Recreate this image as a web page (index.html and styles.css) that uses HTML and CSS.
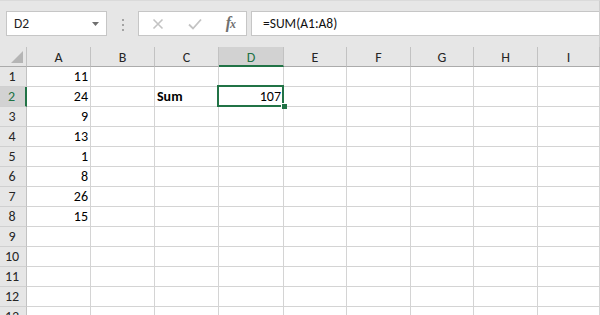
FILE: index.html
```html
<!DOCTYPE html>
<html lang="en">
<head>
  <meta charset="UTF-8" />
  <title>SUM - Sheet</title>
  <link rel="stylesheet" href="styles.css">
</head>
<body>
  <div class="toolbar">
    <div class="name-box">
      <span>D2</span>
      <svg class="caret" width="7" height="4" viewBox="0 0 7 4"><path d="M0 0h7L3.5 4z" fill="#6f6f6f"/></svg>
    </div>
    <div class="grip"><i></i><i></i><i></i></div>
    <div class="fx-buttons">
      <svg width="12" height="12" viewBox="0 0 12 12"><path d="M1.5 1.5l9 9M10.5 1.5l-9 9" stroke="#c3c3c3" stroke-width="1.6" fill="none"/></svg>
      <svg width="14" height="12" viewBox="0 0 14 12"><path d="M1 6.5l4 4L13 1.5" stroke="#c3c3c3" stroke-width="1.8" fill="none"/></svg>
      <span class="fx">f<small>x</small></span>
    </div>
    <div class="formula">=SUM(A1:A8)</div>
  </div>

  <div class="sheet" id="sheet">
    <div class="hd corner"><span class="tri"></span></div>
    <div class="hd">A</div>
    <div class="hd">B</div>
    <div class="hd">C</div>
    <div class="hd sel-col">D</div>
    <div class="hd">E</div>
    <div class="hd">F</div>
    <div class="hd">G</div>
    <div class="hd">H</div>
    <div class="hd">I</div>
  </div>

  <script>
    // A column values, plus the Sum label in C2 and the result in D2
    const values = [11, 24, 9, 13, 1, 8, 26, 15];
    const sheet = document.getElementById('sheet');

    for (let r = 1; r <= 13; r++) {
      const rh = document.createElement('div');
      rh.className = 'rh' + (r === 2 ? ' sel-row' : '');
      rh.textContent = r;
      sheet.appendChild(rh);

      for (let c = 0; c < 9; c++) {
        const cell = document.createElement('div');
        cell.className = 'cell';
        if (c === 0 && values[r - 1] !== undefined) cell.textContent = values[r - 1];
        if (r === 2 && c === 2) {
          cell.textContent = 'Sum';
          cell.classList.add('label');
        }
        if (r === 2 && c === 3) {
          cell.textContent = '107';
          cell.classList.add('active');
        }
        sheet.appendChild(cell);
      }
    }
  </script>
</body>
</html>
```

FILE: styles.css
```css
:root {
  --chrome: #e6e6e6;
  --grid: #d4d4d4;
  --head-line: #c2c2c2;
  --green: #217346;
}

body {
  margin: 0;
  width: 600px;
  height: 315px;
  overflow: hidden;
  background: #fff;
  font-family: Carlito, "Liberation Sans", Arial, sans-serif;
  font-size: 13px;
  color: #000;
}

/* Formula bar */
.toolbar {
  display: flex;
  align-items: flex-start;
  height: 47px;
  box-sizing: border-box;
  padding: 11px 0 0 6px;
  background: var(--chrome);
  border-top: 1px solid #dadada;
  border-right: 1px solid #cfcfcf;
}

.name-box,
.fx-buttons,
.formula {
  height: 25px;
  box-sizing: border-box;
  background: #fff;
  border: 1px solid #c6c6c6;
  display: flex;
  align-items: center;
}

.toolbar > * {
  margin-top: -1px;
}

.name-box {
  width: 101px;
  padding: 0 7px 0 7px;
  justify-content: space-between;
  color: #222;
  font-size: 13.5px;
}

.grip {
  width: 31px;
  display: flex;
  flex-direction: column;
  align-items: center;
  gap: 3px;
  padding-top: 8px;
}

.grip i {
  width: 2px;
  height: 2px;
  background: #a3a3a3;
}

.fx-buttons {
  width: 109px;
  padding: 0 11px 0 13px;
  justify-content: space-between;
}

.fx {
  font-family: "Liberation Serif", serif;
  font-style: italic;
  font-weight: bold;
  font-size: 16px;
  color: #707070;
  letter-spacing: -1px;
  margin-top: -2px;
}

.fx small {
  font-size: 12px;
}

.formula {
  flex: 1;
  margin-left: 4px;
  padding-left: 11px;
  border-right: none;
  color: #111;
  font-size: 13.5px;
}

/* Grid */
.sheet {
  display: grid;
  grid-template-columns: 27px 64px 64px 64px 65px 63px 64px 63px 64px 62px;
  grid-auto-rows: 20px;
  background: #fff;
}

.hd,
.rh,
.cell {
  box-sizing: border-box;
  border-right: 1px solid var(--grid);
  border-bottom: 1px solid var(--grid);
  line-height: 19px;
}

.hd {
  background: var(--chrome);
  border-right-color: var(--head-line);
  border-bottom-color: #ababab;
  text-align: center;
  color: #262626;
  font-size: 14px;
  padding-top: 1px;
}

.corner {
  position: relative;
}

.tri {
  position: absolute;
  right: 3px;
  bottom: 3px;
  width: 0;
  height: 0;
  border-left: 12px solid transparent;
  border-bottom: 12px solid #b5b5b5;
}

.sel-col {
  background: #d2d2d2;
  color: var(--green);
  border-bottom: 2px solid var(--green);
}

.rh {
  background: var(--chrome);
  border-right-color: var(--head-line);
  border-bottom-color: #d0d0d0;
  text-align: center;
  color: #262626;
  font-size: 14px;
  padding-right: 2px;
}

.sel-row {
  background: #d2d2d2;
  color: var(--green);
  border-right: 2px solid var(--green);
}

.cell {
  text-align: right;
  padding-right: 2px;
  white-space: nowrap;
  font-size: 14px;
}

.cell.label {
  text-align: left;
  font-weight: bold;
  padding-left: 2px;
}

/* Active cell outline + fill handle */
.cell.active {
  position: relative;
}

.cell.active::after {
  content: "";
  position: absolute;
  top: -2px;
  left: -2px;
  width: 67px;
  height: 22px;
  box-sizing: border-box;
  border: 2px solid var(--green);
  z-index: 2;
}

.cell.active::before {
  content: "";
  position: absolute;
  right: -4px;
  bottom: -3px;
  width: 5px;
  height: 5px;
  background: var(--green);
  border-left: 1px solid #fff;
  border-top: 1px solid #fff;
  z-index: 3;
}
```
